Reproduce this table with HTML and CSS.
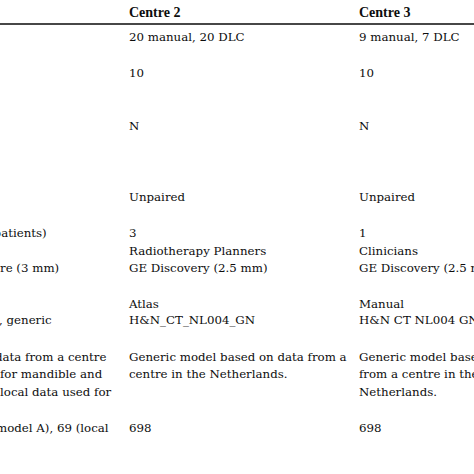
FILE: index.html
```html
<!DOCTYPE html>
<html lang="en">
<head>
<meta charset="utf-8">
<title>Centre comparison table</title>
<link rel="stylesheet" href="styles.css">
</head>
<body>
<div class="table">
  <div class="cell head"></div>
  <div class="cell head">Centre 2</div>
  <div class="cell head">Centre 3</div>

  <div class="cell"></div>
  <div class="cell">20 manual, 20 DLC</div>
  <div class="cell">9 manual, 7 DLC</div>

  <div class="cell"></div>
  <div class="cell">10</div>
  <div class="cell">10</div>

  <div class="cell"></div>
  <div class="cell">N</div>
  <div class="cell">N</div>

  <div class="cell"></div>
  <div class="cell">Unpaired</div>
  <div class="cell">Unpaired</div>

  <div class="cell"><span class="line cut-p">(patients)</span></div>
  <div class="cell">3</div>
  <div class="cell">1</div>

  <div class="cell"></div>
  <div class="cell">Radiotherapy Planners</div>
  <div class="cell">Clinicians</div>

  <div class="cell"><span class="line">re (3 mm)</span></div>
  <div class="cell">GE Discovery (2.5 mm)</div>
  <div class="cell">GE Discovery (2.5 mm)</div>

  <div class="cell"></div>
  <div class="cell">Atlas</div>
  <div class="cell">Manual</div>

  <div class="cell"><span class="line ind-g">, generic</span></div>
  <div class="cell">H&amp;N_CT_NL004_GN</div>
  <div class="cell">H&amp;N CT NL004 GN</div>

  <div class="cell">
    <span class="line cut-d">data from a centre</span>
    <span class="line">for mandible and</span>
    <span class="line">local data used for</span>
  </div>
  <div class="cell">
    <span class="line">Generic model based on data from a</span>
    <span class="line">centre in the Netherlands.</span>
  </div>
  <div class="cell">
    <span class="line">Generic model based on data</span>
    <span class="line">from a centre in the</span>
    <span class="line">Netherlands.</span>
  </div>

  <div class="cell"><span class="line cut-m">model A), 69 (local</span></div>
  <div class="cell">698</div>
  <div class="cell">698</div>
</div>
</body>
</html>
```

FILE: styles.css
```css
html, body {
  margin: 0;
  padding: 0;
  overflow: hidden;
  background: #ffffff;
}

body {
  width: 474px;
  height: 474px;
  font-family: "DejaVu Serif", "Liberation Serif", serif;
  font-size: 11.8px;
  line-height: 17.6px;
  color: #0d0d0d;
}

.table {
  display: grid;
  grid-template-columns: 129px 230px 1fr;
  grid-template-rows: 25px 36px 53.4px 70.6px 36px 18.4px 16.6px 35.7px 16px 37px 71.3px auto;
}

.cell {
  padding-top: 4px;
  white-space: nowrap;
  box-sizing: border-box;
}

.head {
  font-family: "Liberation Serif", "DejaVu Serif", serif;
  font-weight: bold;
  font-size: 14px;
  padding-top: 3.6px;
  border-bottom: 2px solid #474747;
}

.line {
  display: block;
}

.cut-p {
  text-indent: -11px;
}

.cut-d {
  text-indent: -5px;
}

.ind-g {
  text-indent: -1px;
}

.cut-m {
  text-indent: -4px;
}
```
